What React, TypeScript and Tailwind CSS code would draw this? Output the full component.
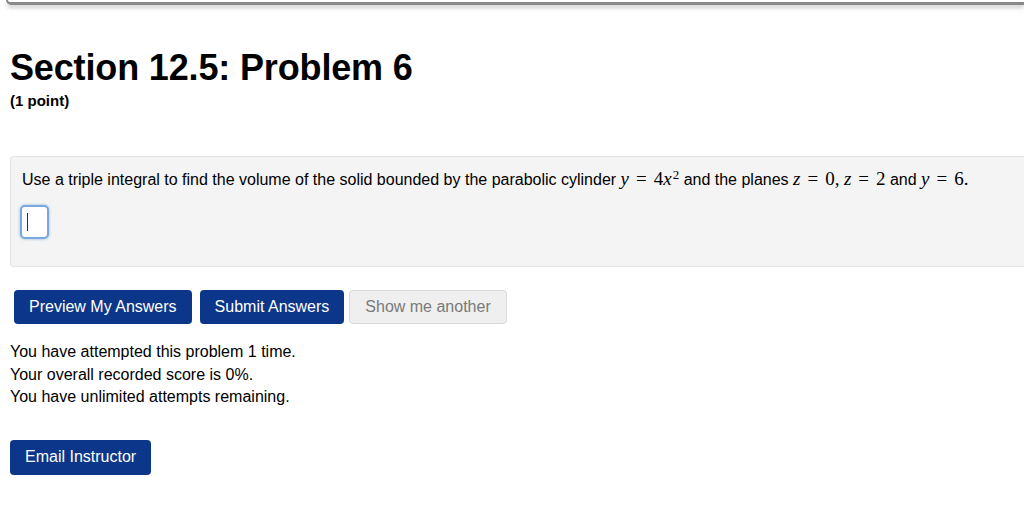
import React from 'react';

const sans = { fontFamily: '"Liberation Sans", Arial, sans-serif' };

function V({ children }: { children: React.ReactNode }) {
  return <i className="font-['Liberation_Serif',serif] text-[19px]">{children}</i>;
}

function N({ children }: { children: React.ReactNode }) {
  return <span className="font-['Liberation_Serif',serif] text-[19px]">{children}</span>;
}

function Eq() {
  return <span className="font-['Liberation_Serif',serif] text-[19px] mx-[7px]">=</span>;
}

export default function App() {
  return (
    <div className="w-[1024px] h-[529px] bg-white overflow-hidden text-black font-['Liberation_Sans',Arial,sans-serif]" style={sans}>
      <div className="ml-[6px] h-[5px] border-b-[3px] border-l-2 border-[#8a8a8a] rounded-bl-[5px] shadow-[0_3px_4px_rgba(0,0,0,0.18)]" />

      <div className="pl-[10px]">
        <h1 className="mt-[41px] text-[36px] leading-[44px] font-bold tracking-[-0.15px]">Section 12.5: Problem 6</h1>
        <div className="mt-[2px] text-[15px] font-bold leading-[18px]">(1 point)</div>

        <div className="mt-[46px] h-[111px] bg-[#f4f4f4] border border-[#e3e3e3] rounded-l-[4px] border-r-0 pl-[11px] pt-[10px]">
          <p className="text-[16px] leading-[24px] whitespace-nowrap">
            Use a triple integral to find the volume of the solid bounded by the parabolic cylinder{' '}
            <V>y</V>
            <Eq />
            <N>4</N>
            <V>x</V>
            <sup className="font-['Liberation_Serif',serif] text-[13px] ml-[1px]">2</sup> and the planes <V>z</V>
            <Eq />
            <N>0,</N> <V>z</V>
            <Eq />
            <N>2</N> and <V>y</V>
            <Eq />
            <N>6.</N>
          </p>
          <div className="mt-[13px] ml-[-2px] w-[29px] h-[34px] bg-white border-[2px] border-[#78a8dd] rounded-[5px] shadow-[0_0_3px_rgba(80,140,220,0.6)] flex items-center pl-[5px]">
            <div className="w-px h-[18px] bg-[#333]" />
          </div>
        </div>

        <div className="mt-[23px] flex gap-[8px] pl-[4px]">
          <button className="h-[34px] px-[15px] rounded-[4px] bg-[#0c3689] text-white text-[16px]">Preview My Answers</button>
          <button className="h-[34px] px-[15px] rounded-[4px] bg-[#0c3689] text-white text-[16px]">Submit Answers</button>
          <button className="h-[34px] px-[15px] rounded-[4px] bg-[#efefef] border border-[#d9d9d9] text-[#7a7a7a] text-[16px] -ml-[3px]">Show me another</button>
        </div>

        <div className="mt-[17px] text-[16px] leading-[22.5px]">
          <div>You have attempted this problem 1 time.</div>
          <div>Your overall recorded score is 0%.</div>
          <div>You have unlimited attempts remaining.</div>
        </div>

        <button className="mt-[31px] h-[35px] px-[15px] rounded-[4px] bg-[#0c3689] text-white text-[16px]">Email Instructor</button>
      </div>
    </div>
  );
}
